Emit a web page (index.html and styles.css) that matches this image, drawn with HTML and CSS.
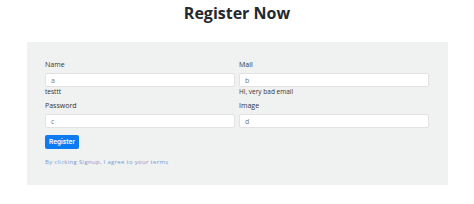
FILE: index.html
```html
<!DOCTYPE html>
<html>
<head>
<meta charset="utf-8">
<link rel="stylesheet" href="styles.css">
</head>
<body>
<h1 class="title">Register Now</h1>
<div class="panel">
  <form class="form">
    <div class="grid">
      <div class="field">
        <label class="label">Name</label>
        <input class="input" value="a">
        <div class="msg">testtt</div>
      </div>
      <div class="field">
        <label class="label">Mail</label>
        <input class="input" value="b">
        <div class="msg">Hi, very bad email</div>
      </div>
      <div class="field">
        <label class="label">Password</label>
        <input class="input" value="c">
      </div>
      <div class="field">
        <label class="label">Image</label>
        <input class="input" value="d">
      </div>
    </div>
    <button type="button" class="btn">Register</button>
    <p class="terms">By clicking Signup, I agree to your terms</p>
  </form>
</div>
</body>
</html>
```
FILE: styles.css
```css
html, body {
  margin: 0;
  padding: 0;
  background: #ffffff;
}
body {
  font-family: "Open Sans", "DejaVu Sans", sans-serif;
  color: #333;
}
.title {
  margin: 0;
  padding-top: 3px;
  height: 37px;
  box-sizing: border-box;
  text-align: center;
  font-family: "Open Sans", sans-serif;
  font-weight: 700;
  font-size: 16px;
  line-height: 20px;
  color: #25282c;
}
.panel {
  margin: 5px 26px 0 27px;
  background: #f0f1f1;
  padding: 18px 19px 24px 18px;
  height: 143px;
  box-sizing: border-box;
}
.grid {
  display: grid;
  grid-template-columns: 190px 190px;
  column-gap: 4px;
}
.field {
  display: flex;
  flex-direction: column;
}
.label {
  font-size: 7px;
  line-height: 9px;
  color: #333;
  margin-bottom: 4px;
}
.input {
  box-sizing: border-box;
  height: 14px;
  border: 1px solid #e2e2e2;
  border-radius: 2px;
  background: #fff;
  padding: 0 5px;
  font-family: "Open Sans", sans-serif;
  font-size: 7px;
  color: #777;
  outline: none;
  margin: 0;
}
.msg {
  font-size: 6.5px;
  line-height: 9px;
  color: #333;
  margin-bottom: 5px;
}
.btn {
  margin-top: 7px;
  display: block;
  width: 34px;
  height: 14px;
  padding: 0;
  border: none;
  border-radius: 2px;
  background: #0d7bf2;
  color: #fff;
  font-family: "Inter", "Liberation Sans", sans-serif;
  font-size: 6.5px;
  font-weight: 600;
}
.terms {
  margin: 9px 0 0 0;
  font-size: 6px;
  line-height: 8px;
  letter-spacing: 0.3px;
  color: #7b9bd1;
}
```
